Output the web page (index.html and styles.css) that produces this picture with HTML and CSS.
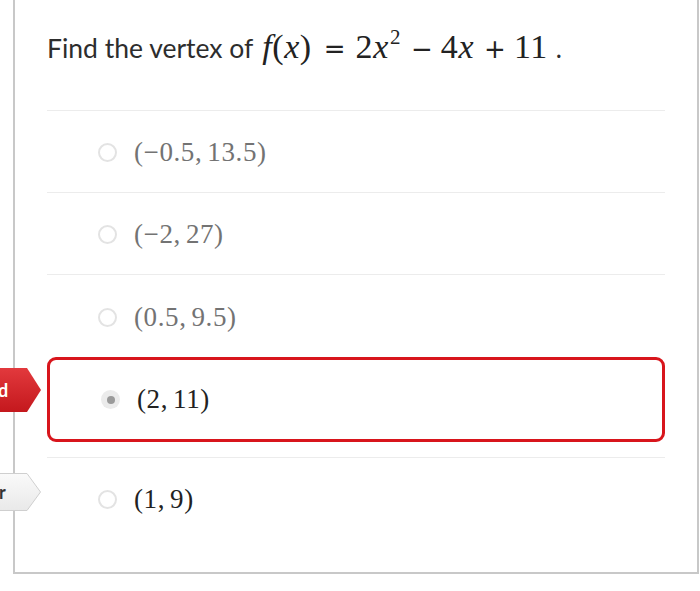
FILE: index.html
```html
<!DOCTYPE html>
<html>
<head>
<meta charset="utf-8">
<link rel="stylesheet" href="styles.css">
</head>
<body>
<div class="card">
  <div class="question">
    <span class="prompt">Find the vertex of</span>
    <span class="math big"><i>f</i>(<i>x</i>)<span class="rel">=</span>2<i>x</i><sup>2</sup><span class="bin">−</span>4<i>x</i><span class="bin">+</span>11</span><span class="dot">.</span>
  </div>
  <div class="option">
    <span class="radio"></span>
    <span class="math faded">(−0.5,<span class="thin"></span>13.5)</span>
  </div>
  <div class="option">
    <span class="radio"></span>
    <span class="math faded">(−2,<span class="thin"></span>27)</span>
  </div>
  <div class="option plain">
    <span class="radio"></span>
    <span class="math faded">(0.5,<span class="thin"></span>9.5)</span>
  </div>
  <div class="selected-wrap">
    <div class="option selected">
      <span class="radio checked"><span class="pip"></span></span>
      <span class="math">(2,<span class="thin"></span>11)</span>
    </div>
  </div>
  <div class="option last">
    <span class="radio"></span>
    <span class="math">(1,<span class="thin"></span>9)</span>
  </div>
</div>

<div class="badge badge-red">
  <svg class="badge-shape" width="42" height="44" viewBox="0 0 42 44">
    <defs>
      <linearGradient id="rg" x1="0" y1="0" x2="0" y2="1">
        <stop offset="0" stop-color="#e2393d"/>
        <stop offset="1" stop-color="#c4181d"/>
      </linearGradient>
    </defs>
    <polygon points="0,0 27,0 41,22 27,44 0,44" fill="url(#rg)"/>
  </svg>
  <span class="badge-text">d</span>
</div>

<div class="badge badge-gray">
  <svg class="badge-shape" width="42" height="38" viewBox="0 0 42 38">
    <defs>
      <linearGradient id="gg" x1="0" y1="0" x2="0" y2="1">
        <stop offset="0" stop-color="#fafafa"/>
        <stop offset="1" stop-color="#e9e9e9"/>
      </linearGradient>
    </defs>
    <polygon points="-1,0.5 27,0.5 40.5,19 27,37.5 -1,37.5" fill="url(#gg)" stroke="#cfcfcf" stroke-width="1"/>
  </svg>
  <span class="badge-text">r</span>
</div>
</body>
</html>
```

FILE: styles.css
```css
html, body {
  margin: 0;
  padding: 0;
  background: #ffffff;
}

.card {
  box-sizing: border-box;
  margin-left: 13px;
  width: 686px;
  height: 574px;
  border: 2px solid #c8c8c8;
  border-top: none;
  padding: 0 32px;
  background: #fff;
}

.question {
  box-sizing: border-box;
  height: 111px;
  border-bottom: 1px solid #ececec;
  padding-top: 28px;
  font-family: "Lato", "Liberation Sans", sans-serif;
  font-size: 26.5px;
  color: #2d2d2d;
  white-space: nowrap;
}

.prompt {
  margin-right: 2px;
}

.math {
  font-family: "Liberation Serif", "Times New Roman", serif;
  font-size: 27px;
  letter-spacing: 0.6px;
  color: #222;
  white-space: nowrap;
}

.math i {
  font-style: italic;
}

.math.big {
  font-size: 34px;
  letter-spacing: 0.6px;
}

.math sup {
  font-size: 21px;
  vertical-align: 14px;
  line-height: 0;
  margin-left: 1px;
}

.rel,
.bin {
  font-family: "DejaVu Sans", sans-serif;
  font-size: 26px;
  letter-spacing: 0;
}

.rel {
  margin: 0 10px 0 12px;
}

.bin {
  margin: 0 8px 0 10px;
}

.dot {
  font-size: 26px;
  margin-left: 8px;
}

.thin {
  display: inline-block;
  width: 5px;
}

.faded {
  color: #737373;
}

.option {
  box-sizing: border-box;
  height: 82px;
  border-bottom: 1px solid #ececec;
  display: flex;
  align-items: center;
  padding-left: 51px;
  padding-top: 2px;
}

.option.plain {
  border-bottom: none;
}

.option.last {
  border-bottom: none;
  padding-top: 0;
}

.radio {
  box-sizing: border-box;
  width: 19px;
  height: 19px;
  border-radius: 50%;
  border: 2px solid #e3e3e3;
  margin-right: 17px;
  flex: none;
  display: flex;
  align-items: center;
  justify-content: center;
}

.radio.checked {
  border: none;
  background: #ebebeb;
}

.pip {
  width: 8px;
  height: 8px;
  border-radius: 50%;
  background: #9a9a9a;
}

.selected-wrap {
  box-sizing: border-box;
  height: 101px;
  border-bottom: 1px solid #ececec;
}

.option.selected {
  height: 85px;
  border: 3px solid #d8151c;
  border-radius: 9px;
  padding-left: 51px;
  padding-top: 0;
}

.badge {
  position: absolute;
  left: 0;
}

.badge-red {
  top: 368px;
  width: 42px;
  height: 44px;
}

.badge-gray {
  top: 473px;
  width: 42px;
  height: 38px;
}

.badge-shape {
  position: absolute;
  left: 0;
  top: 0;
}

.badge-text {
  position: absolute;
  left: 0;
  top: 0;
  bottom: 0;
  display: flex;
  align-items: center;
  font-family: "Lato", "Liberation Sans", sans-serif;
  font-weight: 700;
  font-size: 18px;
}

.badge-red .badge-text {
  color: #fff;
  left: -2px;
}

.badge-gray .badge-text {
  color: #333;
  left: -1px;
}
```
